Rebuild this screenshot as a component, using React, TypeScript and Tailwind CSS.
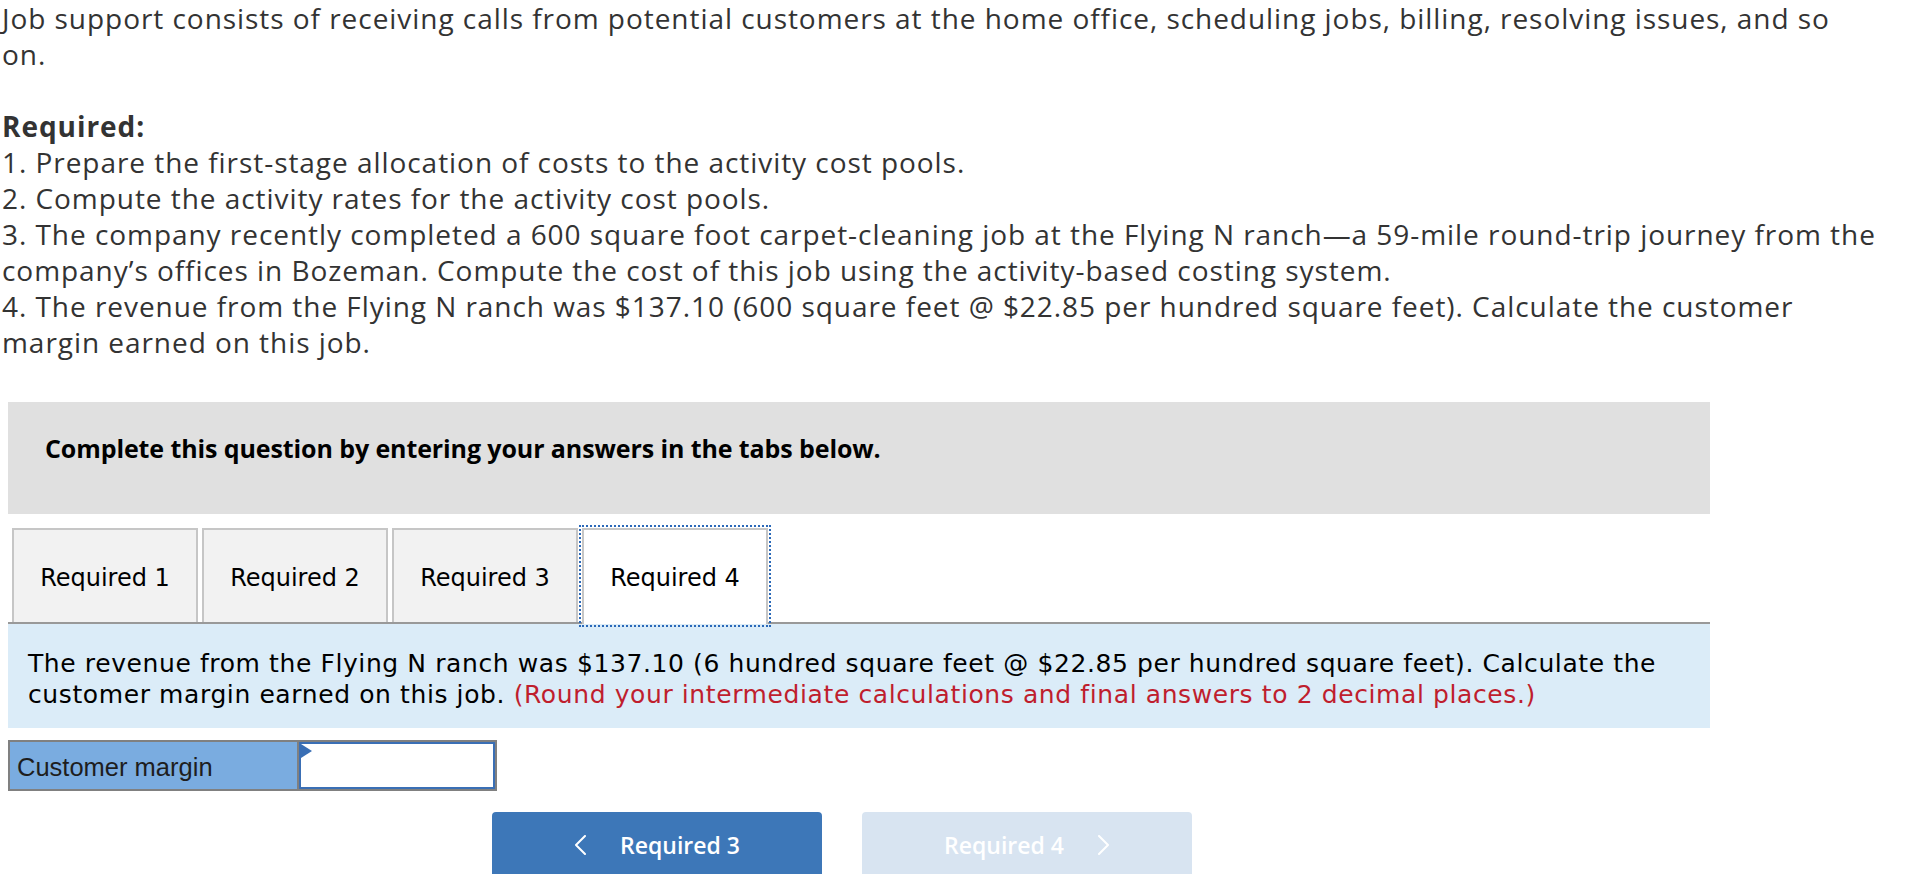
import React from "react";

const topLines: React.ReactNode[] = [
  "Job support consists of receiving calls from potential customers at the home office, scheduling jobs, billing, resolving issues, and so",
  "on.",
  "\u00a0",
  <span className="font-bold">Required:</span>,
  "1. Prepare the first-stage allocation of costs to the activity cost pools.",
  "2. Compute the activity rates for the activity cost pools.",
  "3. The company recently completed a 600 square foot carpet-cleaning job at the Flying N ranch\u2014a 59-mile round-trip journey from the",
  "company\u2019s offices in Bozeman. Compute the cost of this job using the activity-based costing system.",
  "4. The revenue from the Flying N ranch was $137.10 (600 square feet @ $22.85 per hundred square feet). Calculate the customer",
  "margin earned on this job.",
];

function ChevronL() {
  return (
    <svg width="12" height="20" viewBox="0 0 12 20" fill="none">
      <path d="M11 1 L2 10 L11 19" stroke="white" strokeWidth="2" strokeLinecap="round" strokeLinejoin="round" />
    </svg>
  );
}
function ChevronR() {
  return (
    <svg width="12" height="20" viewBox="0 0 12 20" fill="none">
      <path d="M1 1 L10 10 L1 19" stroke="white" strokeWidth="2" strokeLinecap="round" strokeLinejoin="round" />
    </svg>
  );
}

export default function App() {
  const tabs = ["Required 1", "Required 2", "Required 3"];
  return (
    <div className="w-[1912px] min-h-[900px] bg-white">
      <div className="pl-[2px] text-[#333333] font-['Open_Sans',sans-serif] text-[28px] leading-[36px] tracking-[0.95px]">
        {topLines.map((l, i) => (
          <div key={i} className="whitespace-nowrap">{l}</div>
        ))}
      </div>

      <div className="mt-[42px] ml-[8px] w-[1702px]">
        <div className="h-[112px] bg-[#e0e0e0] pt-[31px] pl-[37px] font-['Open_Sans',sans-serif] font-bold text-[25px] leading-[30px] tracking-[-0.1px] text-black">
          Complete this question by entering your answers in the tabs below.
        </div>

        <div className="mt-[14px] flex gap-[4px] pl-[4px] font-['DejaVu_Sans',sans-serif] text-[24px] text-black">
          {tabs.map((t) => (
            <div
              key={t}
              className="w-[186px] h-[94px] border-2 border-b-0 border-[#c6c6c6] bg-[#f2f2f2] flex items-center justify-center pt-[4px] whitespace-nowrap"
            >
              {t}
            </div>
          ))}
          <div className="relative z-10 w-[186px] h-[96px] -mb-[2px] border-2 border-b-0 border-[#c6c6c6] bg-white flex items-center justify-center pt-[2px] whitespace-nowrap outline-2 outline-dotted outline-[#2a68b8] outline-offset-[1px]">
            Required 4
          </div>
        </div>

        <div className="border-t-2 border-[#999999] bg-[#dbecf8] pt-[24px] pb-[18px] pl-[20px] pr-[20px] font-['DejaVu_Sans',sans-serif] text-[25px] leading-[31px] tracking-[0.6px] text-black">
          The revenue from the Flying N ranch was $137.10 (6 hundred square feet @ $22.85 per hundred square feet). Calculate the customer margin earned on this job.{" "}
          <span className="text-[#bf1e2e]">(Round your intermediate calculations and final answers to 2 decimal places.)</span>
        </div>

        <div className="mt-[12px] flex w-[489px] h-[51px] border-2 border-[#808080]">
          <div className="w-[289px] border-r-2 border-[#808080] bg-[#7aace0] flex items-center pl-[7px] pt-[3px] font-['Liberation_Sans',Arial,sans-serif] text-[25.5px] text-[#1e1e1e]">
            Customer margin
          </div>
          <div className="relative flex-1 border-2 border-[#3a6fb5] bg-white">
            <svg className="absolute left-0 top-0" width="12" height="16" viewBox="0 0 12 16">
              <path d="M0 0 L11 7 L0 14 Z" fill="#3a6fb5" />
            </svg>
          </div>
        </div>

        <div className="mt-[21px] ml-[484px] flex gap-[40px] font-['Open_Sans',sans-serif] font-semibold text-[23px] text-white">
          <div className="w-[330px] h-[66px] rounded-[4px] bg-[#3d77b8] flex items-center justify-center gap-[34px]">
            <ChevronL />
            <span>Required 3</span>
          </div>
          <div className="w-[330px] h-[66px] rounded-[4px] bg-[#d8e4f1] flex items-center justify-center gap-[34px]">
            <span>Required 4</span>
            <ChevronR />
          </div>
        </div>
      </div>
    </div>
  );
}
